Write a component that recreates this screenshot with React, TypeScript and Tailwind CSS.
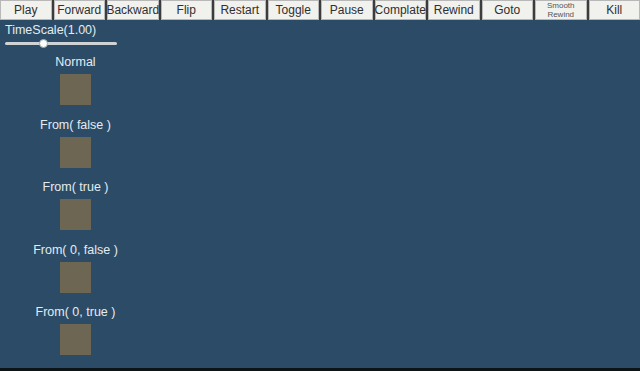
import React from 'react'

const buttons = [
  'Play', 'Forward', 'Backward', 'Flip', 'Restart', 'Toggle',
  'Pause', 'Complate', 'Rewind', 'Goto', 'Smooth Rewind', 'Kill'
]

const samples = ['Normal', 'From( false )', 'From( true )', 'From( 0, false )', 'From( 0, true )']

export default function App() {
  return (
    <div
      className="w-[640px] h-[371px] bg-[#2b4b66] flex flex-col overflow-hidden"
      style={{ fontFamily: '"Liberation Sans", Arial, sans-serif' }}
    >
      {/* Toolbar */}
      <div className="grid grid-cols-12 h-[20px] bg-[#3c3c3c] gap-x-[2px] pb-[1px]">
        {buttons.map((b) => (
          <div
            key={b}
            className="flex items-center justify-center bg-[#f1f1ee] border border-[#b8b8b8] text-[#2f2f2f] leading-none"
          >
            {b === 'Smooth Rewind' ? (
              <span className="text-[8px] leading-[9px] text-center text-[#555]">
                Smooth<br />Rewind
              </span>
            ) : (
              <span className="text-[12px] whitespace-nowrap">{b}</span>
            )}
          </div>
        ))}
      </div>

      {/* Time scale */}
      <div className="pl-[5px] pt-[2px] text-[12.5px] text-[#e4ecf2] leading-[16px]">TimeScale(1.00)</div>
      <div className="relative ml-[5px] w-[112px] h-[10px] mt-[1px]">
        <div className="absolute left-0 right-0 top-[3px] h-[3px] rounded-full bg-[#cfd3d6]" />
        <div className="absolute left-[34px] top-0 w-[9px] h-[9px] rounded-full bg-white border border-[#9aa]" />
      </div>

      {/* Samples */}
      <div className="flex flex-col w-[151px] mt-[10px]">
        {samples.map((s) => (
          <div key={s} className="flex flex-col items-center h-[62.5px]">
            <div className="text-[12.5px] leading-[14px] text-[#e4ecf2] whitespace-nowrap">{s}</div>
            <div className="mt-[5px] w-[31px] h-[31px] bg-[#6d6652]" />
          </div>
        ))}
      </div>

      <div className="mt-auto h-[5px] bg-[#0c1418]" />
    </div>
  )
}
